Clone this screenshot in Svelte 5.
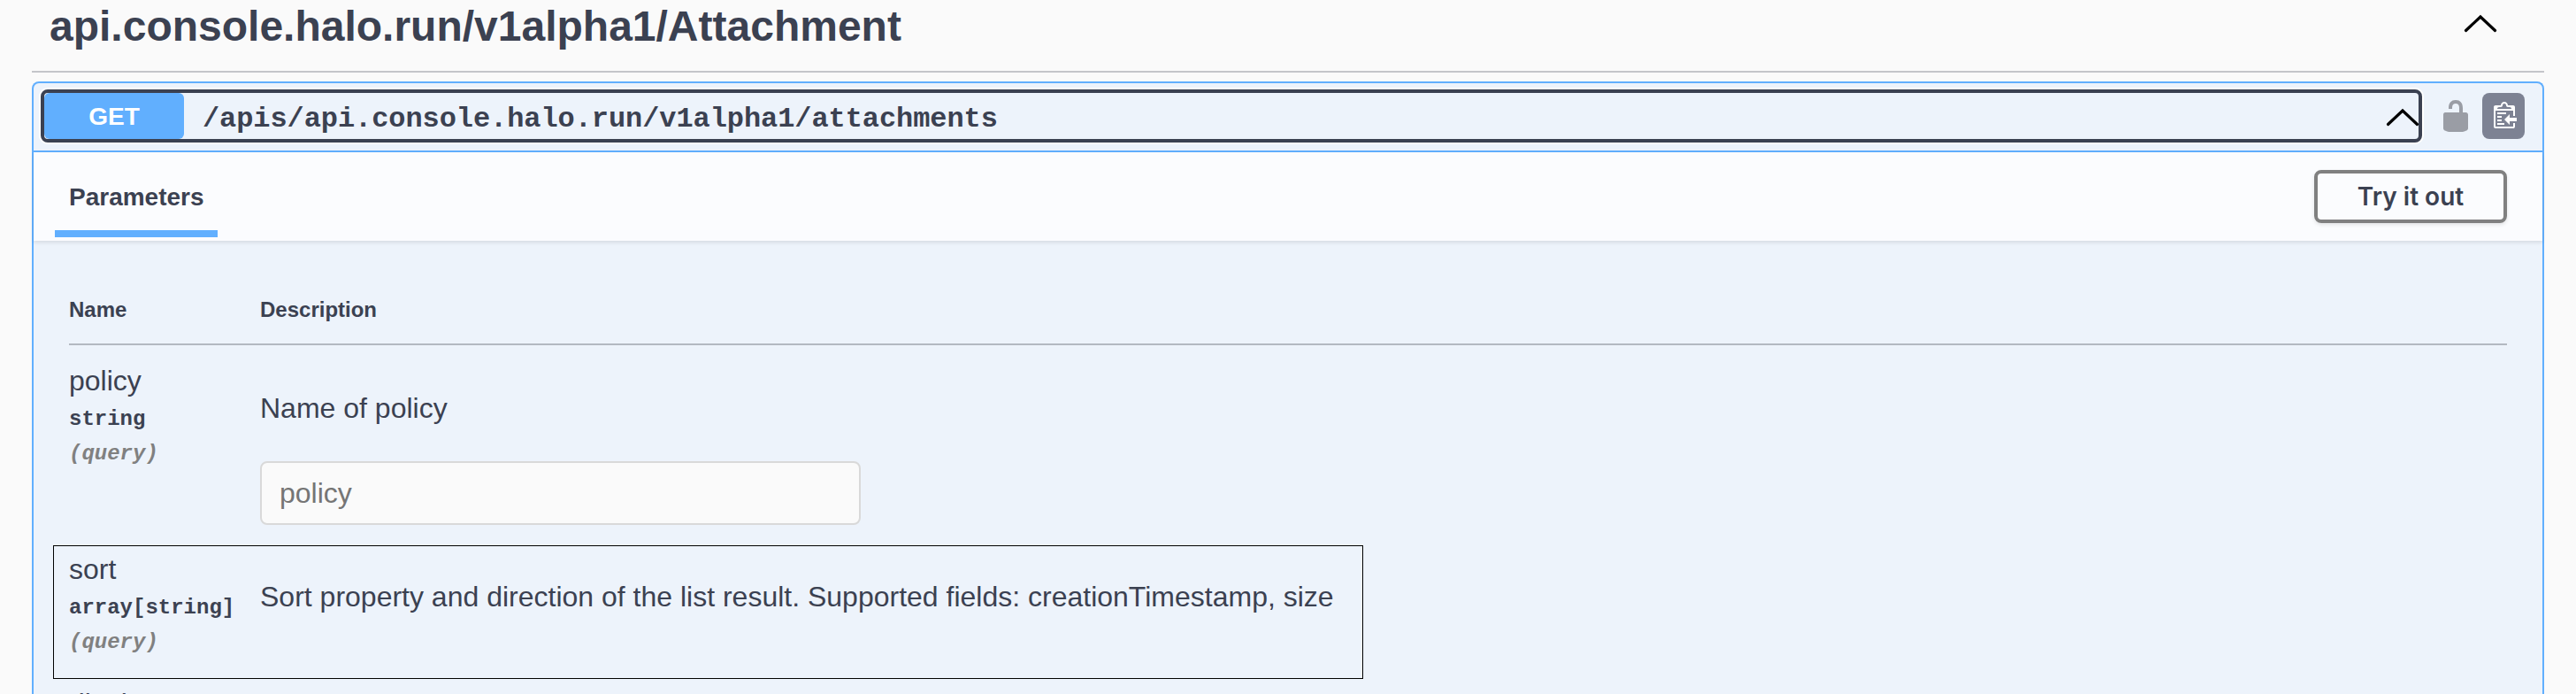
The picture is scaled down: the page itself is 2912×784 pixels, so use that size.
<script>
  const rows = [
    { name: 'policy', type: 'string', desc: 'Name of policy', placeholder: 'policy', cls: 'plain' },
    { name: 'sort', type: 'array[string]', desc: 'Sort property and direction of the list result. Supported fields: creationTimestamp, size', cls: 'focused' },
    { name: 'displayName', type: 'string', desc: 'Display name of attachment', cls: 'next' }
  ];
</script>

<div class="page">
  <header class="tag">
    <h3>api.console.halo.run/v1alpha1/Attachment</h3>
    <svg class="chev tag-chev" viewBox="0 0 40 40" aria-hidden="true"><path d="M3.5 28.5 20 13 36.5 28.5" /></svg>
  </header>

  <section class="opblock">
    <div class="summary">
      <div class="control">
        <span class="method">GET</span>
        <span class="path">/apis/api.console.halo.run/v1alpha1/attachments</span>
        <svg class="chev ctl-chev" viewBox="0 0 40 40" aria-hidden="true"><path d="M3.5 28.5 20 13 36.5 28.5" /></svg>
      </div>
      <svg class="lock" viewBox="0 0 20 20" aria-hidden="true">
        <path d="M15.8 8H14V5.6C14 2.703 12.665 1 10 1 7.334 1 6 2.703 6 5.6V6h2v-.801C8 3.754 8.797 3 10 3c1.203 0 2 .754 2 2.199V8H4c-.553 0-1 .646-1 1.199V17c0 .549.428 1.139.951 1.307l1.197.387C5.672 18.861 6.55 19 7.1 19h5.8c.549 0 1.428-.139 1.951-.307l1.196-.387c.524-.167.953-.757.953-1.306V9.199C17 8.646 16.352 8 15.8 8z" />
      </svg>
      <div class="copy">
        <svg viewBox="0 0 15 16" aria-hidden="true">
          <g transform="translate(2 -1)">
            <path fill-rule="evenodd" d="M2 13h4v1H2v-1zm5-6H2v1h5V7zm2 3V8l-3 3 3 3v-2h5v-2H9zM4.5 9H2v1h2.5V9zM2 12h2.5v-1H2v1zm9 1h1v2c-.02.28-.11.52-.3.7-.19.18-.42.28-.7.3H1c-.55 0-1-.45-1-1V4c0-.55.45-1 1-1h3c0-1.11.89-2 2-2 1.11 0 2 .89 2 2h3c.55 0 1 .45 1 1v5h-1V6H1v9h10v-2zM2 5h8c0-.55-.45-1-1-1H8c-.55 0-1-.45-1-1s-.45-1-1-1-1 .45-1 1-.45 1-1 1H3c-.55 0-1 .45-1 1z" />
          </g>
        </svg>
      </div>
    </div>

    <div class="tabs">
      <div class="tab">Parameters</div>
      <button class="try">Try it out</button>
    </div>

    <div class="params">
      <div class="thead">
        <span class="th-name">Name</span>
        <span>Description</span>
      </div>
      {#each rows as r}
        <div class="row {r.cls}">
          <div class="col-name">
            <div class="pname">{r.name}</div>
            <div class="ptype">{r.type}</div>
            <div class="pin">(query)</div>
          </div>
          <div class="col-desc">
            <p>{r.desc}</p>
            {#if r.placeholder}
              <input placeholder={r.placeholder} />
            {/if}
          </div>
        </div>
      {/each}
    </div>
  </section>
</div>

<style>
  :global(html), :global(body) {
    margin: 0;
    height: 784px;
    overflow: hidden;
    background: #fafafa;
  }
  .page {
    width: 2912px;
    height: 784px;
    overflow: hidden;
    background: #fafafa;
    font-family: "Liberation Sans", Arial, sans-serif;
    color: #3b4151;
  }
  .tag {
    display: flex;
    justify-content: space-between;
    align-items: flex-start;
    box-sizing: border-box;
    height: 82px;
    margin: 0 36px 10px;
    padding: 0 52px 0 20px;
    border-bottom: 2px solid #c4c5ca;
  }
  h3 {
    margin: 0;
    font-size: 48px;
    line-height: 60px;
    font-weight: 700;
  }
  .chev {
    width: 40px;
    height: 40px;
    flex: none;
  }
  .chev path {
    fill: none;
    stroke: #000;
    stroke-width: 3.2;
    stroke-linecap: round;
    stroke-linejoin: miter;
  }
  .tag-chev {
    margin-top: 6px;
  }
  .opblock {
    box-sizing: border-box;
    margin: 0 36px;
    height: 720px;
    border: 2px solid #61affe;
    border-bottom: 0;
    border-radius: 8px 8px 0 0;
    background: #edf3fb;
  }
  .summary {
    box-sizing: border-box;
    display: flex;
    align-items: center;
    height: 78px;
    padding: 0 20px 2px 8px;
    border-bottom: 2px solid #61affe;
  }
  .control {
    box-sizing: border-box;
    display: flex;
    align-items: center;
    width: 2692px;
    height: 60px;
    border: 4px solid #3b4151;
    border-radius: 8px;
    box-shadow: 0 0 0 2px #fff;
  }
  .method {
    box-sizing: border-box;
    width: 158px;
    height: 52px;
    padding-top: 2px;
    border-radius: 6px;
    background: #61affe;
    color: #fff;
    font-size: 28px;
    font-weight: 700;
    line-height: 50px;
    text-align: center;
  }
  .path {
    flex: 1;
    padding: 6px 0 0 21px;
    font-family: "Liberation Mono", monospace;
    font-size: 32px;
    font-weight: 700;
    letter-spacing: -0.08px;
  }
  .ctl-chev {
    margin-right: -2px;
    margin-top: 2px;
  }
  .lock {
    width: 40px;
    height: 40px;
    margin-left: 18px;
    fill: #9a9da5;
  }
  .copy {
    display: flex;
    align-items: center;
    justify-content: center;
    width: 48px;
    height: 52px;
    margin-left: 10px;
    border-radius: 8px;
    background: #7d8293;
  }
  .copy svg {
    width: 30px;
    height: 32px;
    fill: #fff;
  }
  .tabs {
    display: flex;
    justify-content: space-between;
    align-items: center;
    height: 100px;
    padding: 0 40px 0 24px;
    background: #fbfcfe;
    box-shadow: 0 2px 4px rgba(0, 0, 0, 0.1);
    position: relative;
  }
  .tab {
    box-sizing: border-box;
    align-self: flex-start;
    height: 96px;
    padding: 14px 15px 0 16px;
    border-bottom: 8px solid #61affe;
    font-size: 28px;
    font-weight: 700;
    line-height: 74px;
  }
  .try {
    box-sizing: border-box;
    width: 218px;
    height: 60px;
    padding: 0;
    border: 4px solid #808080;
    border-radius: 8px;
    background: transparent;
    box-shadow: 0 2px 4px rgba(0, 0, 0, 0.1);
    color: #3b4151;
    font-family: Inter, sans-serif;
    font-size: 28px;
    font-weight: 600;
  }
  .params {
    padding: 0 40px;
  }
  .thead {
    display: flex;
    align-items: center;
    box-sizing: border-box;
    height: 118px;
    padding-top: 40px;
    border-bottom: 2px solid #b3b8c1;
    font-size: 24px;
    font-weight: 700;
  }
  .th-name {
    width: 216px;
  }
  .row {
    display: flex;
    box-sizing: border-box;
  }
  .plain {
    padding: 20px 0 23px;
  }
  .focused {
    width: fit-content;
    margin-left: -18px;
    padding: 6px 32px 26px 17px;
    border: 1px solid #000;
  }
  .next {
    padding-top: 8px;
  }
  .col-name {
    width: 216px;
    flex: none;
  }
  .pname {
    font-size: 32px;
    line-height: 40px;
  }
  .ptype,
  .pin {
    font-family: "Liberation Mono", monospace;
    font-size: 24px;
    font-weight: 700;
    line-height: 28px;
  }
  .ptype {
    margin-top: 10px;
  }
  .pin {
    margin-top: 11px;
    color: #808080;
    font-style: italic;
  }
  .col-desc {
    padding-top: 29px;
  }
  p {
    margin: 0;
    font-size: 32px;
    line-height: 44px;
    white-space: nowrap;
  }
  input {
    display: block;
    box-sizing: border-box;
    width: 679px;
    height: 72px;
    margin-top: 38px;
    padding: 0 20px;
    border: 2px solid #d9d9d9;
    border-radius: 8px;
    background: #fafafa;
    font-family: "Liberation Sans", Arial, sans-serif;
    font-size: 32px;
    color: #3b4151;
    outline: none;
  }
  input::placeholder {
    color: #757575;
    opacity: 1;
  }
</style>
